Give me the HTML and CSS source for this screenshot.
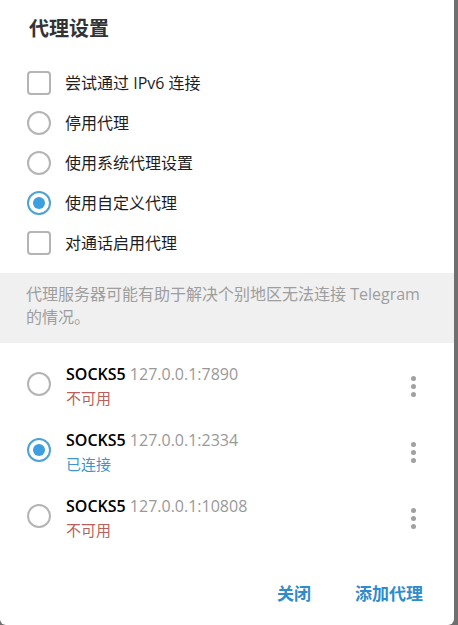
FILE: index.html
```html
<!DOCTYPE html>
<html lang="zh-CN">
<head>
<meta charset="utf-8">
<title>代理设置</title>
<link rel="stylesheet" href="styles.css">
</head>
<body>
<div class="dialog">
  <div class="title">代理设置</div>
  <div class="options">
    <div class="opt"><span class="check"></span><span class="label">尝试通过 IPv6 连接</span></div>
    <div class="opt"><span class="radio"></span><span class="label">停用代理</span></div>
    <div class="opt"><span class="radio"></span><span class="label">使用系统代理设置</span></div>
    <div class="opt"><span class="radio on"></span><span class="label">使用自定义代理</span></div>
    <div class="opt"><span class="check"></span><span class="label">对通话启用代理</span></div>
  </div>
  <div class="about">代理服务器可能有助于解决个别地区无法连接 Telegram<br>的情况。</div>
  <div class="list">
    <div class="item">
      <span class="radio"></span>
      <div class="info">
        <div class="name"><b>SOCKS5</b> <span class="addr">127.0.0.1:7890</span></div>
        <div class="status bad">不可用</div>
      </div>
      <span class="more"><i></i><i></i><i></i></span>
    </div>
    <div class="item">
      <span class="radio on"></span>
      <div class="info">
        <div class="name"><b>SOCKS5</b> <span class="addr">127.0.0.1:2334</span></div>
        <div class="status ok">已连接</div>
      </div>
      <span class="more"><i></i><i></i><i></i></span>
    </div>
    <div class="item">
      <span class="radio"></span>
      <div class="info">
        <div class="name"><b>SOCKS5</b> <span class="addr">127.0.0.1:10808</span></div>
        <div class="status bad">不可用</div>
      </div>
      <span class="more"><i></i><i></i><i></i></span>
    </div>
  </div>
  <div class="footer">
    <span class="btn">关闭</span>
    <span class="btn">添加代理</span>
  </div>
</div>
</body>
</html>
```
FILE: styles.css
```css
html, body {
  margin: 0;
  padding: 0;
  background: #6f6f6f;
}
body {
  width: 458px;
  height: 625px;
  overflow: hidden;
  font-family: "Open Sans", "Noto Sans CJK SC", sans-serif;
}
.dialog {
  width: 454px;
  height: 625px;
  background: #ffffff;
  border-radius: 0 0 6px 6px;
  overflow: hidden;
  display: flex;
  flex-direction: column;
}
.title {
  height: 63px;
  box-sizing: border-box;
  padding: 16px 0 0 29px;
  font-size: 20px;
  line-height: 26px;
  font-weight: 700;
  color: #333333;
}
.options {
  display: flex;
  flex-direction: column;
}
.opt {
  height: 40px;
  display: flex;
  align-items: center;
  padding-left: 27px;
}
.label {
  margin-left: 14px;
  font-size: 16px;
  line-height: 22px;
  color: #1e1e1e;
}
.check, .radio {
  width: 24px;
  height: 24px;
  box-sizing: border-box;
  border: 2px solid #b4b4b4;
  flex: none;
  display: flex;
  align-items: center;
  justify-content: center;
}
.check {
  border-radius: 4px;
}
.radio {
  border-radius: 50%;
}
.radio.on {
  border-color: #4ea2d4;
}
.radio.on::after {
  content: "";
  width: 12px;
  height: 12px;
  border-radius: 50%;
  background: #3d9fe0;
}
.about {
  margin-top: 10px;
  height: 70px;
  box-sizing: border-box;
  padding: 10px 20px 0 26px;
  background: #f0f0f0;
  color: #9e9e9e;
  font-size: 16px;
  line-height: 23px;
}
.list {
  padding-top: 8px;
  display: flex;
  flex-direction: column;
}
.item {
  height: 66px;
  display: flex;
  align-items: center;
  padding-left: 27px;
}
.info {
  margin-left: 15px;
  padding-top: 4px;
  flex: 1;
}
.name {
  font-size: 16px;
  line-height: 24px;
  color: #000000;
}
.name b {
  font-weight: 600;
}
.addr {
  color: #999999;
}
.status {
  font-size: 15px;
  line-height: 24px;
}
.status.bad {
  color: #b95f5c;
}
.status.ok {
  color: #3d95c9;
}
.more {
  width: 6px;
  margin-right: 38px;
  display: flex;
  flex-direction: column;
  align-items: center;
  gap: 3px;
  margin-top: 4px;
}
.more i {
  width: 5px;
  height: 5px;
  border-radius: 50%;
  background: #a0a0a0;
}
.footer {
  margin-top: 25px;
  height: 40px;
  display: flex;
  justify-content: flex-end;
  align-items: center;
  gap: 44px;
  padding-right: 31px;
}
.btn {
  font-size: 17px;
  line-height: 22px;
  font-weight: 700;
  color: #2f8bcb;
}
```
